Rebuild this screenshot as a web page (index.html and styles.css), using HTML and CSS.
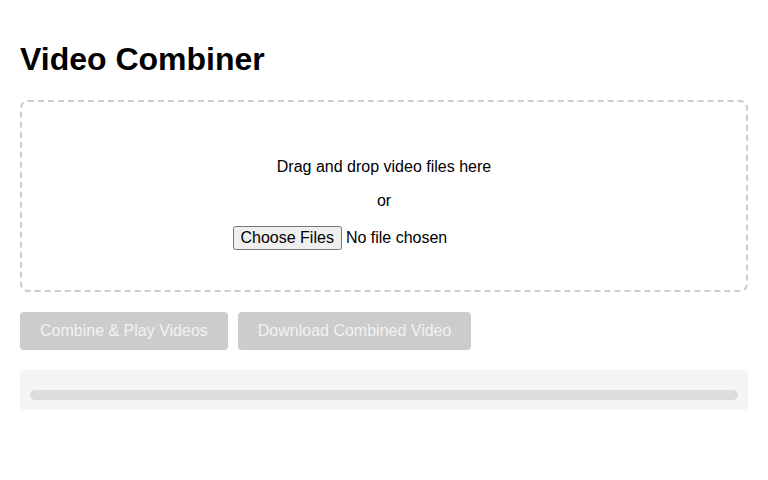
FILE: index.html
```html
<!DOCTYPE html>
<html lang="en">
<head>
	<meta charset="utf-8">
	<title>Video Combiner</title>
	<link rel="stylesheet" href="styles.css">
</head>
<body>
	<h1>Video Combiner</h1>

	<div id="dropZone" class="drop-zone">
		<p>Drag and drop video files here</p>
		<p>or</p>
		<input type="file" id="fileInput" accept="video/*" multiple>
	</div>

	<div class="controls">
		<button id="btnCombine" disabled>Combine &amp; Play Videos</button>
		<button id="btnDownload" disabled>Download Combined Video</button>
	</div>

	<div class="progress">
		<div class="progress-bar"></div>
	</div>
</body>
</html>
```

FILE: styles.css
```css
body {
	font-family: "Liberation Sans", Arial, sans-serif;
	margin: 0;
	padding: 20px;
	color: black;
	background-color: white;
}
h1 {
	font-size: 2em;
	margin: 21px 0 22px;
}
.drop-zone {
	border: 2px dashed #ccc;
	border-radius: 8px;
	padding: 40px 20px;
	text-align: center;
}
.drop-zone p { margin: 16px 0; }
.drop-zone input {
	font-family: "Liberation Sans", Arial, sans-serif;
	font-size: 16px;
}
.controls {
	display: flex;
	gap: 10px;
	margin-top: 20px;
}
.controls button {
	font-family: "Liberation Sans", Arial, sans-serif;
	font-size: 16px;
	padding: 10px 20px;
	border: none;
	border-radius: 4px;
	color: #f2f2f2;
	background-color: #ccc;
}
.progress {
	margin-top: 20px;
	padding: 20px 10px 10px;
	border-radius: 4px;
	background-color: #f5f5f5;
}
.progress-bar {
	height: 10px;
	border-radius: 5px;
	background-color: #ddd;
}
```
